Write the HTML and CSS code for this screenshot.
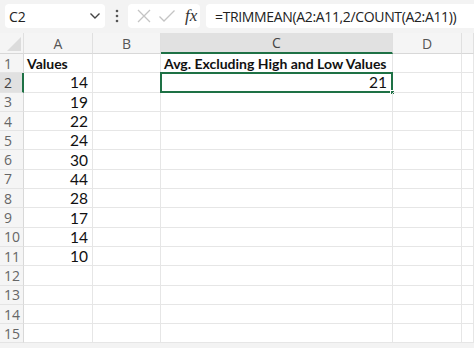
FILE: index.html
```html
<!DOCTYPE html>
<html>
<head>
<meta charset="utf-8">
<link rel="stylesheet" href="styles.css">
</head>
<body>
<div class="toolbar">
  <div class="namebox"><span>C2</span>
    <svg class="chev" width="12" height="8" viewBox="0 0 12 8"><path d="M1.5 1.5 L6 6 L10.5 1.5" fill="none" stroke="#444" stroke-width="1.4"/></svg>
  </div>
  <div class="dots"><svg width="4" height="14" viewBox="0 0 4 14"><circle cx="2" cy="2" r="1.3" fill="#555"/><circle cx="2" cy="7" r="1.3" fill="#555"/><circle cx="2" cy="12" r="1.3" fill="#555"/></svg></div>
  <div class="fxbox">
    <svg width="16" height="16" viewBox="0 0 16 16"><path d="M2 2 L14 14 M14 2 L2 14" stroke="#c4c4c4" stroke-width="1.3"/></svg>
    <svg width="18" height="16" viewBox="0 0 18 16"><path d="M1.5 8.5 L6 13 L16.5 2.5" fill="none" stroke="#c4c4c4" stroke-width="1.3"/></svg>
    <span class="fx">fx</span>
  </div>
  <div class="formula">=TRIMMEAN(A2:A11,2/COUNT(A2:A11))</div>
</div>
<div class="sheet">
  <div class="ch corner"><svg width="16" height="16" viewBox="0 0 16 16"><path d="M16 2 L16 16 L2 16 Z" fill="#dcdcdc"/></svg></div>
  <div class="ch">A</div><div class="ch">B</div><div class="ch sel">C</div><div class="ch">D</div><div class="ch"></div>

  <div class="rh">1</div><div class="c b">Values</div><div class="c"></div><div class="c b">Avg. Excluding High and Low Values</div><div class="c"></div><div class="c"></div>
  <div class="rh sel">2</div><div class="c n">14</div><div class="c"></div><div class="c n active">21<span class="handle"></span></div><div class="c"></div><div class="c"></div>
  <div class="rh">3</div><div class="c n">19</div><div class="c"></div><div class="c"></div><div class="c"></div><div class="c"></div>
  <div class="rh">4</div><div class="c n">22</div><div class="c"></div><div class="c"></div><div class="c"></div><div class="c"></div>
  <div class="rh">5</div><div class="c n">24</div><div class="c"></div><div class="c"></div><div class="c"></div><div class="c"></div>
  <div class="rh">6</div><div class="c n">30</div><div class="c"></div><div class="c"></div><div class="c"></div><div class="c"></div>
  <div class="rh">7</div><div class="c n">44</div><div class="c"></div><div class="c"></div><div class="c"></div><div class="c"></div>
  <div class="rh">8</div><div class="c n">28</div><div class="c"></div><div class="c"></div><div class="c"></div><div class="c"></div>
  <div class="rh">9</div><div class="c n">17</div><div class="c"></div><div class="c"></div><div class="c"></div><div class="c"></div>
  <div class="rh">10</div><div class="c n">14</div><div class="c"></div><div class="c"></div><div class="c"></div><div class="c"></div>
  <div class="rh">11</div><div class="c n">10</div><div class="c"></div><div class="c"></div><div class="c"></div><div class="c"></div>
  <div class="rh">12</div><div class="c"></div><div class="c"></div><div class="c"></div><div class="c"></div><div class="c"></div>
  <div class="rh">13</div><div class="c"></div><div class="c"></div><div class="c"></div><div class="c"></div><div class="c"></div>
  <div class="rh">14</div><div class="c"></div><div class="c"></div><div class="c"></div><div class="c"></div><div class="c"></div>
  <div class="rh">15</div><div class="c"></div><div class="c"></div><div class="c"></div><div class="c"></div><div class="c"></div>
</div>
</body>
</html>
```
FILE: styles.css
```css
* { box-sizing: border-box; }
html, body { margin: 0; padding: 0; }
body {
  width: 474px;
  height: 348px;
  overflow: hidden;
  background: #f3f3f3;
  font-family: "Open Sans", "Noto Sans", sans-serif;
  color: #222;
}
.toolbar {
  height: 33px;
  display: flex;
  align-items: flex-start;
  padding: 4px 0 0 5px;
  background: #f3f3f3;
}
.namebox {
  width: 100px;
  height: 24px;
  background: #fff;
  border-radius: 4px;
  display: flex;
  align-items: center;
  justify-content: space-between;
  padding: 0 4px 0 4px;
  font-size: 14px;
  color: #222;
}
.dots {
  width: 23px;
  height: 24px;
  display: flex;
  align-items: center;
  justify-content: center;
}
.fxbox {
  width: 72px;
  height: 24px;
  background: #fff;
  border-radius: 4px;
  display: flex;
  align-items: center;
  gap: 6px;
  padding-left: 8px;
}
.fx {
  font-family: "Liberation Serif", serif;
  font-style: italic;
  font-size: 17px;
  color: #333;
  margin-left: 3px;
}
.formula {
  margin-left: 6px;
  flex: 1;
  min-width: 0;
  height: 24px;
  background: #fff;
  border-radius: 4px 0 0 4px;
  display: flex;
  align-items: center;
  padding-left: 9px;
  font-size: 14px;
  letter-spacing: -0.35px;
  color: #222;
  white-space: nowrap;
  overflow: hidden;
}
.sheet {
  width: 474px;
  display: grid;
  grid-template-columns: 24px 69px 68px 232px 69px minmax(0, 1fr);
  grid-template-rows: 21px repeat(15, 19.3px);
  background: #fff;
  overflow: hidden;
}
.ch {
  background: #f5f5f5;
  border-right: 1px solid #e0e0e0;
  border-bottom: 1px solid #d8d8d8;
  display: flex;
  align-items: center;
  justify-content: center;
  font-size: 14px;
  color: #555;
}
.ch.corner {
  align-items: flex-end;
  justify-content: flex-end;
  padding: 0 2px 2px 0;
}
.ch.sel {
  background: #e1e1e1;
  border-bottom: 2px solid #1e7145;
  color: #444;
}
.rh {
  background: #f5f5f5;
  border-bottom: 1px solid #e4e4e4;
  border-right: 1px solid #d8d8d8;
  display: flex;
  align-items: center;
  padding-left: 4px;
  font-size: 14px;
  color: #666;
}
.rh.sel {
  background: #e1e1e1;
  border-right: 2px solid #1e7145;
  color: #444;
}
.c {
  border-right: 1px solid #e6e6e6;
  border-bottom: 1px solid #e6e6e6;
  display: flex;
  align-items: center;
  padding: 0 4px;
  font-family: Lato, "Open Sans", sans-serif;
  font-size: 15.5px;
  color: #111;
  white-space: nowrap;
  position: relative;
}
.c.b { font-weight: 700; font-size: 14px; padding-left: 3px; }
.c.n { justify-content: flex-end; }
.c.active {
  border: 2px solid #1e7145;
  margin: -1px 0 0 -1px;
}
.handle {
  position: absolute;
  right: -4px;
  bottom: -4px;
  width: 5px;
  height: 5px;
  background: #1e7145;
  border: 1px solid #fff;
}
```
